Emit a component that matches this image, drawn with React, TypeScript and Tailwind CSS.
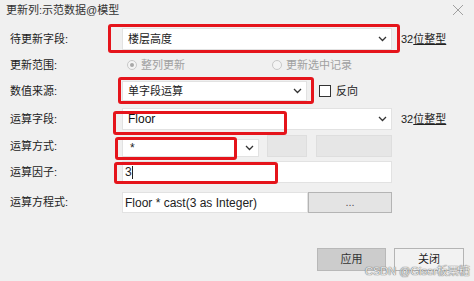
import React from "react";

const cjk = "font-['Liberation_Sans','Noto_Sans_CJK_SC',sans-serif]";

function Chevron() {
  return (
    <svg width="9" height="6" viewBox="0 0 9 6" className="shrink-0">
      <path d="M1 1 L4.5 4.5 L8 1" fill="none" stroke="#333" strokeWidth="1.3" />
    </svg>
  );
}

function Label({ children }: { children: React.ReactNode }) {
  return <div className="w-[112px] shrink-0 text-[11px] text-[#222]">{children}</div>;
}

// red highlight boxes drawn over the form
const marks = [
  { left: 108, top: 24, width: 292, height: 29 },
  { left: 118, top: 77, width: 196, height: 27 },
  { left: 113, top: 111, width: 174, height: 24 },
  { left: 115, top: 137, width: 122, height: 23 },
  { left: 114, top: 162, width: 164, height: 22 },
];

export default function App() {
  return (
    <div className={`relative w-[474px] h-[281px] overflow-hidden bg-[#f0f0f0] ${cjk}`}>
      {/* Title bar */}
      <div className="h-[20px] flex items-center justify-between pl-[6px] pr-[10px]">
        <span className="text-[11px] text-[#333]">更新列:示范数据@模型</span>
        <svg width="12" height="12" viewBox="0 0 12 12">
          <path d="M1 1 L11 11 M11 1 L1 11" stroke="#a0a0a0" strokeWidth="1" fill="none" />
        </svg>
      </div>

      <div className="flex flex-col pl-[10px]">
        {/* 待更新字段 */}
        <div className="mt-[8px] h-[22px] flex items-center">
          <Label>待更新字段:</Label>
          <div className="w-[270px] h-full bg-white border border-[#e2e2e2] flex items-center justify-between pl-[5px] pr-[4px]">
            <span className="text-[11px] text-[#222]">楼层高度</span>
            <Chevron />
          </div>
          <span className="ml-[9px] text-[11px] text-[#222]">
            32<span className="underline">位整型</span>
          </span>
        </div>

        {/* 更新范围 */}
        <div className="mt-[4px] h-[22px] flex items-center">
          <Label>更新范围:</Label>
          <div className="w-[150px] flex items-center pl-[5px] gap-[4px]">
            <span className="w-[10px] h-[10px] rounded-full border border-[#c8c8c8] bg-[#f4f4f4] flex items-center justify-center">
              <span className="w-[4px] h-[4px] rounded-full bg-[#a8a8a8]" />
            </span>
            <span className="text-[11px] text-[#a0a0a0]">整列更新</span>
          </div>
          <div className="flex items-center gap-[4px]">
            <span className="w-[10px] h-[10px] rounded-full border border-[#c8c8c8] bg-[#f4f4f4]" />
            <span className="text-[11px] text-[#a0a0a0]">更新选中记录</span>
          </div>
        </div>

        {/* 数值来源 */}
        <div className="mt-[4px] h-[22px] flex items-center">
          <Label>数值来源:</Label>
          <div className="w-[185px] h-[20px] bg-white border border-[#e2e2e2] flex items-center justify-between pl-[5px] pr-[4px]">
            <span className="text-[11px] text-[#222]">单字段运算</span>
            <Chevron />
          </div>
          <span className="ml-[12px] w-[12px] h-[12px] border border-[#333] bg-white" />
          <span className="ml-[5px] text-[11px] text-[#222]">反向</span>
        </div>

        {/* 运算字段 */}
        <div className="mt-[6px] h-[22px] flex items-center">
          <Label>运算字段:</Label>
          <div className="w-[270px] h-full bg-white border border-[#e2e2e2] flex items-center justify-between pl-[5px] pr-[4px]">
            <span className="text-[12px] text-[#111] font-medium">Floor</span>
            <Chevron />
          </div>
          <span className="ml-[9px] text-[11px] text-[#222]">
            32<span className="underline">位整型</span>
          </span>
        </div>

        {/* 运算方式 */}
        <div className="mt-[5px] h-[22px] flex items-center">
          <Label>运算方式:</Label>
          <div className="w-[137px] h-[18px] mt-[4px] bg-white border border-[#e2e2e2] flex items-center justify-between pl-[7px] pr-[4px]">
            <span className="text-[12px] text-[#222] leading-none">*</span>
            <Chevron />
          </div>
          <div className="ml-[8px] w-[40px] h-full bg-[#e6e6e6] border border-[#dedede]" />
          <div className="ml-[9px] w-[76px] h-full bg-[#e6e6e6] border border-[#dedede]" />
        </div>

        {/* 运算因子 */}
        <div className="mt-[4px] h-[22px] flex items-center">
          <Label>运算因子:</Label>
          <div className="w-[270px] h-full bg-white border border-[#e2e2e2] flex items-center pl-[2px]">
            <span className="text-[12px] text-[#222]">3</span>
            <span className="w-px h-[13px] bg-[#222]" />
          </div>
        </div>

        {/* 运算方程式 */}
        <div className="mt-[9px] h-[21px] flex items-center">
          <Label>运算方程式:</Label>
          <div className="w-[186px] h-full bg-white border border-[#e2e2e2] flex items-center pl-[2px]">
            <span className="text-[12px] text-[#222] whitespace-nowrap">Floor * cast(3 as Integer)</span>
          </div>
          <button className="w-[84px] h-full bg-[#e4e4e4] border border-[#b4b4b4] text-[11px] text-[#555] flex items-center justify-center">
            ...
          </button>
        </div>

        {/* Buttons */}
        <div className="mt-[35px] h-[23px] flex items-center justify-end pr-[10px] gap-[8px]">
          <button className="w-[69px] h-full bg-[#cccccc] border border-[#b8b8b8] text-[11px] text-[#333]">应用</button>
          <button className="w-[70px] h-full bg-[#f2f2f2] border border-[#b4b4b4] text-[11px] text-[#222]">关闭</button>
        </div>
      </div>

      {/* red highlight marks */}
      {marks.map((m, i) => (
        <div
          key={i}
          className="absolute border-[3px] border-[#e5141b] rounded-[3px] pointer-events-none"
          style={{ left: m.left, top: m.top, width: m.width, height: m.height }}
        />
      ))}

      {/* watermark */}
      <div className="absolute left-[365px] top-[265px] text-[11px] leading-[13px] text-[#eaeaea] whitespace-nowrap [text-shadow:0_0_1px_#666,0_0_1px_#666]">
        CSDN @Giser板栗糖
      </div>
    </div>
  );
}
